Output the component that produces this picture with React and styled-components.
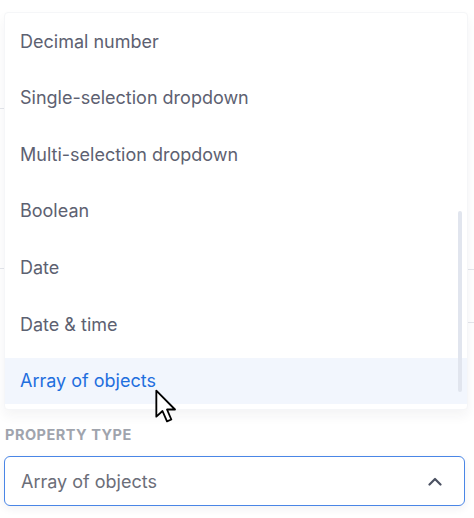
import React from 'react';
import styled, { createGlobalStyle } from 'styled-components';

const GlobalStyle = createGlobalStyle`
  html, body {
    margin: 0;
    padding: 0;
    background: #ffffff;
  }
  body {
    font-family: Inter, "Noto Sans", "Liberation Sans", sans-serif;
    -webkit-font-smoothing: antialiased;
  }
`;

const Page = styled.div`
  position: relative;
  width: 474px;
  height: 518px;
  overflow: hidden;
  background: #ffffff;
`;

const Backdrop = styled.div`
  display: flex;
  justify-content: space-between;
  height: 426px;
`;

const RuleColumn = styled.div`
  display: flex;
  flex-direction: column;
  width: ${({ $width }) => $width}px;
`;

const Rule = styled.div`
  height: 1px;
  margin-top: ${({ $gap }) => $gap}px;
  background: #e4e6eb;
`;

const Field = styled.div`
  display: flex;
  flex-direction: column;
  padding: 0 9px 0 4px;
`;

const Label = styled.div`
  padding-left: 1px;
  font-size: 14.5px;
  font-weight: 700;
  letter-spacing: 0.5px;
  line-height: 18px;
  color: #a0a4ad;
  text-transform: uppercase;
`;

const Select = styled.div`
  display: flex;
  align-items: center;
  justify-content: space-between;
  height: 50px;
  margin-top: 12px;
  padding: 0 22px 0 16px;
  box-sizing: border-box;
  border: 1.5px solid #4a86e6;
  border-radius: 6px;
  box-shadow: 0 3px 8px rgba(30, 40, 60, 0.06);
  font-size: 18px;
  color: #6b6e79;
`;

const Menu = styled.div`
  position: absolute;
  left: 4px;
  top: 12px;
  width: 462px;
  padding: 5px 0;
  display: flex;
  flex-direction: column;
  gap: 10.67px;
  background: #ffffff;
  border: 1px solid #f5f6f8;
  border-radius: 4px;
  box-shadow: 0 6px 12px rgba(30, 40, 60, 0.05);
`;

const Item = styled.div`
  display: flex;
  align-items: center;
  height: 46px;
  padding-left: 15px;
  font-size: 18px;
  color: ${({ $active }) => ($active ? '#1f6fde' : '#5d6171')};
  background: ${({ $active }) => ($active ? '#f2f6fd' : 'transparent')};
`;

const Thumb = styled.div`
  position: absolute;
  right: 5px;
  top: 198px;
  width: 4px;
  height: 181px;
  border-radius: 2px;
  background: #e1e5ee;
`;

const Cursor = styled.svg`
  position: absolute;
  left: 154px;
  top: 389px;
`;

const items = [
  'Decimal number',
  'Single-selection dropdown',
  'Multi-selection dropdown',
  'Boolean',
  'Date',
  'Date & time',
  'Array of objects',
];

const Chevron = () => (
  <svg width="14" height="9" viewBox="0 0 14 9" fill="none">
    <path d="M1.5 7.5 L7 2 L12.5 7.5" stroke="#4b5162" strokeWidth="2.2" strokeLinecap="round" strokeLinejoin="round" />
  </svg>
);

export default function App() {
  const selected = 'Array of objects';
  return (
    <Page>
      <GlobalStyle />
      <Backdrop>
        <RuleColumn $width={4}>
          <Rule $gap={108} />
          <Rule $gap={159} />
        </RuleColumn>
        <RuleColumn $width={8}>
          <Rule $gap={269} />
          <Rule $gap={52} />
        </RuleColumn>
      </Backdrop>
      <Field>
        <Label>Property type</Label>
        <Select>
          <span>{selected}</span>
          <Chevron />
        </Select>
      </Field>
      <Menu>
        {items.map(item => (
          <Item key={item} $active={item === selected}>
            {item}
          </Item>
        ))}
        <Thumb />
      </Menu>
      <Cursor width="24" height="35" viewBox="0 0 14 21">
        <path
          d="M1.2 1 V16.6 L4.9 13.2 L7.6 19.4 L10.2 18.3 L7.6 12.3 H12.4 Z"
          fill="#ffffff"
          stroke="#000000"
          strokeWidth="1.1"
          strokeLinejoin="round"
        />
      </Cursor>
    </Page>
  );
}
